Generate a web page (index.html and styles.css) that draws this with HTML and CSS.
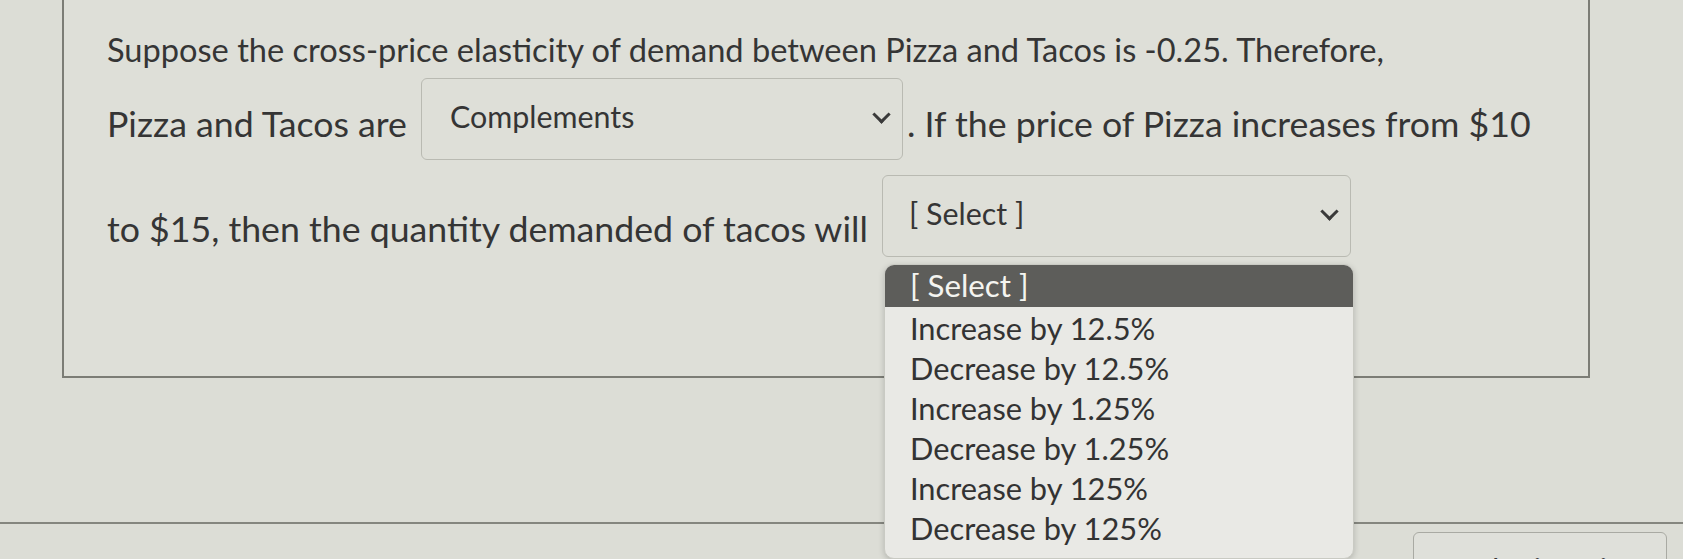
FILE: index.html
```html
<!DOCTYPE html>
<html lang="en">
<head>
  <meta charset="UTF-8" />
  <meta name="viewport" content="width=device-width, initial-scale=1" />
  <title>Quiz Question</title>
  <link rel="stylesheet" href="styles.css">
</head>
<body>

  <div class="page">
    <div class="question-card">
      <div class="question-text">
        <span class="lead">Suppose the cross-price elasticity of demand between Pizza and Tacos is -0.25. Therefore,</span><br>
        Pizza and Tacos are
        <div class="select select-first">
          Complements
          <span class="chevron"></span>
        </div>. If the price of Pizza increases from $10<br>
        to $15, then the quantity demanded of tacos will
        <div class="select is-open">
          [ Select ]
          <span class="chevron"></span>
          <ul class="options">
            <li class="selected">[ Select ]</li>
            <li>Increase by 12.5%</li>
            <li>Decrease by 12.5%</li>
            <li>Increase by 1.25%</li>
            <li>Decrease by 1.25%</li>
            <li>Increase by 125%</li>
            <li>Decrease by 125%</li>
          </ul>
        </div>
      </div>
    </div>

    <div class="quiz-footer">
      <button class="submit-btn">Submit Quiz</button>
    </div>
  </div>

</body>
</html>
```

FILE: styles.css
```css
body {
  margin: 0;
  background-color: #dcddd6;
  color: #353535;
  font-family: 'Lato', 'Open Sans', sans-serif;
  overflow: hidden;
}

.page {
  height: 559px;
  overflow: hidden;
}

.question-card {
  margin-left: 62px;
  width: 1528px;
  height: 378px;
  box-sizing: border-box;
  border: 2px solid #7c7d76;
  border-top: none;
  background-color: #dedfd8;
  padding: 22px 0 0 43px;
}

.question-text {
  font-size: 35.7px;
  line-height: 1.5;
}

.question-text .lead {
  font-size: 32.6px;
}

.select {
  position: relative;
  display: inline-block;
  box-sizing: border-box;
  height: 82px;
  margin: 2px 4px 13px 5px;
  padding: 19px 0 0 28px;
  border: 1.5px solid #b9bab2;
  border-radius: 6px;
  font-size: 30.4px;
  line-height: 1.2;
  vertical-align: 9px;
  text-align: left;
}

.select-first {
  width: 482px;
}

.select.is-open {
  width: 469px;
  padding-left: 26px;
  vertical-align: 17px;
}

.chevron {
  position: absolute;
  right: 14px;
  top: 29px;
  width: 10px;
  height: 10px;
  border-right: 3.5px solid #3a3a3a;
  border-bottom: 3.5px solid #3a3a3a;
  transform: rotate(45deg);
}

.options {
  position: absolute;
  left: 1px;
  top: 88px;
  width: 468px;
  margin: 0;
  padding: 0 0 11px 0;
  list-style: none;
  background-color: #e9e9e5;
  border: 1px solid #c9cac3;
  border-radius: 10px;
  box-shadow: 0 2px 6px rgba(0, 0, 0, 0.18);
  overflow: hidden;
  font-size: 30.8px;
  line-height: 39px;
  z-index: 2;
}

.options li {
  padding: 2px 0 0 25px;
  height: 38px;
  color: #333;
}

.options li.selected {
  height: 41px;
  padding-top: 1px;
  background-color: #5d5d5a;
  color: #f4f4f0;
  font-size: 31.3px;
}

.quiz-footer {
  margin-top: 144px;
  border-top: 2px solid #85867f;
  position: relative;
  height: 36px;
}

.submit-btn {
  position: absolute;
  left: 1413px;
  top: 8px;
  width: 254px;
  height: 60px;
  background-color: #dfe0da;
  border: 1.5px solid #a9aaa3;
  border-radius: 6px;
  font-family: 'Lato', sans-serif;
  font-size: 30px;
  color: #383838;
  padding-top: 14px;
  vertical-align: top;
}
```
